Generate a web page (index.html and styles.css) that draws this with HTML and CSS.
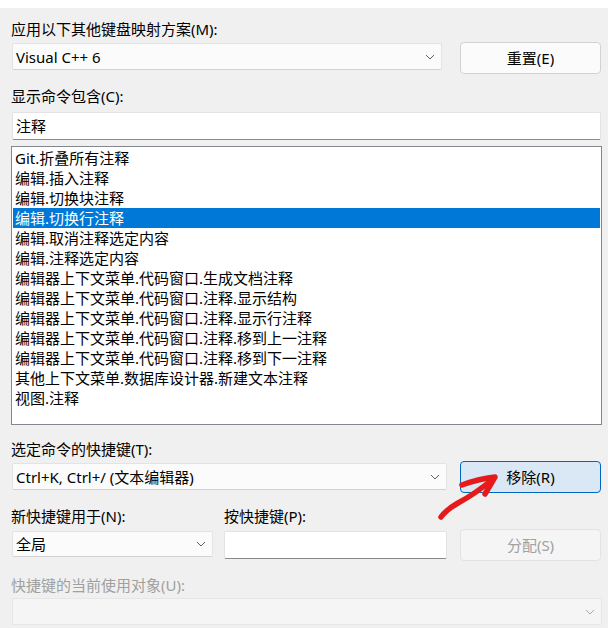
FILE: index.html
```html
<!DOCTYPE html>
<html lang="zh-CN">
<head>
<meta charset="utf-8">
<link rel="stylesheet" href="styles.css">
</head>
<body>
<div class="topstrip"></div>
<div class="dialog">
  <div class="label">应用以下其他键盘映射方案(M):</div>
  <div class="row row1">
    <div class="combo combo-scheme"><span class="ctext">Visual C++ 6</span>
      <svg class="chev" width="10" height="6" viewBox="0 0 10 6"><path d="M1 1 L5 5 L9 1" fill="none" stroke="#5f5f5f" stroke-width="1"/></svg>
    </div>
    <div class="btn">重置(E)</div>
  </div>
  <div class="label label2">显示命令包含(C):</div>
  <div class="textbox tb-filter">注释</div>
  <div class="listbox">
    <div class="item">Git.折叠所有注释</div>
    <div class="item">编辑.插入注释</div>
    <div class="item">编辑.切换块注释</div>
    <div class="item selected">编辑.切换行注释</div>
    <div class="item">编辑.取消注释选定内容</div>
    <div class="item">编辑.注释选定内容</div>
    <div class="item">编辑器上下文菜单.代码窗口.生成文档注释</div>
    <div class="item">编辑器上下文菜单.代码窗口.注释.显示结构</div>
    <div class="item">编辑器上下文菜单.代码窗口.注释.显示行注释</div>
    <div class="item">编辑器上下文菜单.代码窗口.注释.移到上一注释</div>
    <div class="item">编辑器上下文菜单.代码窗口.注释.移到下一注释</div>
    <div class="item">其他上下文菜单.数据库设计器.新建文本注释</div>
    <div class="item">视图.注释</div>
  </div>
  <div class="label label3">选定命令的快捷键(T):</div>
  <div class="row row2">
    <div class="combo combo-keys"><span class="ctext">Ctrl+K, Ctrl+/ (文本编辑器)</span>
      <svg class="chev" width="10" height="6" viewBox="0 0 10 6"><path d="M1 1 L5 5 L9 1" fill="none" stroke="#5f5f5f" stroke-width="1"/></svg>
    </div>
    <div class="btn btn-focus">移除(R)</div>
  </div>
  <div class="grid">
    <div class="label glabel">新快捷键用于(N):</div>
    <div class="label glabel">按快捷键(P):</div>
    <div></div>
    <div class="combo combo-scope"><span class="ctext">全局</span>
      <svg class="chev" width="10" height="6" viewBox="0 0 10 6"><path d="M1 1 L5 5 L9 1" fill="none" stroke="#5f5f5f" stroke-width="1"/></svg>
    </div>
    <div class="textbox tb-press"></div>
    <div class="btn btn-disabled">分配(S)</div>
  </div>
  <div class="label label-disabled">快捷键的当前使用对象(U):</div>
  <div class="combo combo-disabled">
    <svg class="chev" width="10" height="6" viewBox="0 0 10 6"><path d="M1 1 L5 5 L9 1" fill="none" stroke="#a8a8a8" stroke-width="1"/></svg>
  </div>
</div>
<svg class="arrow" width="608" height="628" viewBox="0 0 608 628">
  <path d="M441 517 Q446 510 458 503 Q475 494 493 479" fill="none" stroke="#e51b1b" stroke-width="5.5" stroke-linecap="round" stroke-linejoin="round"/>
  <path d="M462 485 Q478 479 495 477 L485 494" fill="none" stroke="#e51b1b" stroke-width="5.5" stroke-linecap="round" stroke-linejoin="round"/>
</svg>
</body>
</html>
```
FILE: styles.css
```css
html, body {
  margin: 0;
  padding: 0;
  background: #ffffff;
}
body {
  width: 608px;
  height: 628px;
  overflow: hidden;
  position: relative;
  font-family: "Noto Sans", "Noto Sans CJK SC", sans-serif;
  font-size: 15px;
  color: #000;
}
.topstrip {
  height: 8px;
  background: #ffffff;
}
.dialog {
  background: #f0f0f0;
  height: 620px;
  padding: 11px 0 0 12px;
  box-sizing: border-box;
}
.label {
  height: 20px;
  line-height: 20px;
  margin-left: -1px;
  white-space: nowrap;
}
.row {
  display: flex;
  align-items: flex-start;
}
.row1 {
  margin-top: 3px;
  gap: 18px;
}
.combo {
  box-sizing: border-box;
  height: 27px;
  background: #fbfbfb;
  border: 1px solid #e3e3e3;
  border-bottom-color: #d2d2d2;
  border-radius: 2px;
  display: flex;
  align-items: center;
  justify-content: space-between;
  padding: 0 6px 0 3px;
  white-space: nowrap;
}
.ctext {
  line-height: 20px;
}
.chev {
  display: block;
}
.combo-scheme {
  width: 430px;
  margin-top: 1px;
}
.btn {
  box-sizing: border-box;
  width: 141px;
  height: 32px;
  border: 1px solid #d2d2d2;
  border-radius: 4px;
  background: #fbfbfb;
  display: flex;
  align-items: center;
  justify-content: center;
  line-height: 20px;
}
.btn-focus {
  background: #dae8f5;
  border-color: #0067c0;
}
.btn-disabled {
  background: #f5f5f5;
  border-color: #e3e3e3;
  color: #a0a0a0;
}
.label2 {
  margin-top: 12px;
}
.textbox {
  box-sizing: border-box;
  height: 28px;
  background: #ffffff;
  border: 1px solid #e3e3e3;
  border-bottom-color: #8a8a8a;
  border-radius: 2px;
  padding: 0 3px;
  line-height: 26px;
}
.tb-filter {
  margin-top: 6px;
  width: 589px;
}
.listbox {
  box-sizing: border-box;
  margin-top: 6px;
  margin-left: -1px;
  width: 591px;
  height: 279px;
  background: #ffffff;
  border: 1px solid #828790;
  padding: 1px 1px 0 1px;
}
.item {
  height: 20px;
  line-height: 20px;
  padding-left: 2px;
  white-space: nowrap;
}
.item.selected {
  background: #0078d7;
  color: #ffffff;
}
.label3 {
  margin-top: 14px;
}
.row2 {
  margin-top: 2px;
  gap: 13px;
}
.combo-keys {
  width: 435px;
  margin-top: 2px;
}
.grid {
  display: grid;
  grid-template-columns: 201px 223px 141px;
  grid-template-rows: 20px 32px;
  column-gap: 11px;
  row-gap: 3px;
  margin-top: 13px;
}
.grid .glabel:nth-child(2) {
  margin-left: 0;
}
.grid .btn-disabled {
  margin-left: 2px;
}
.combo-scope {
  width: 201px;
  height: 26px;
  margin-top: 2px;
}
.tb-press {
  width: 223px;
  margin-top: 2px;
}
.label-disabled {
  margin-top: 14px;
  color: #a0a0a0;
}
.combo-disabled {
  margin-top: 3px;
  width: 590px;
  background: #f5f5f5;
  border-color: #e6e6e6;
  justify-content: flex-end;
  padding-right: 6px;
}
.arrow {
  position: absolute;
  left: 0;
  top: 0;
  pointer-events: none;
}
```
